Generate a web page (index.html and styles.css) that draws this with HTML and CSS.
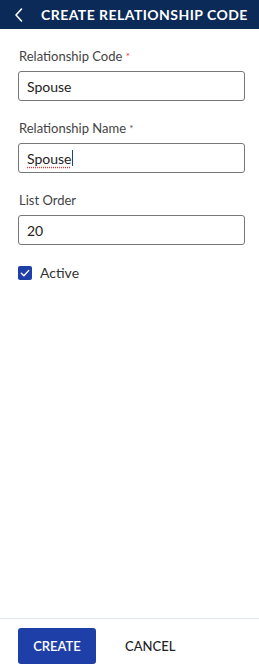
FILE: index.html
```html
<!DOCTYPE html>
<html lang="en">
<head>
  <meta charset="UTF-8" />
  <title>Create Relationship Code</title>
  <link rel="stylesheet" href="styles.css">
</head>
<body>
  <div class="panel">
    <header class="panel-header">
      <button class="back" aria-label="Back">
        <svg viewBox="0 0 10 16" width="10" height="16" aria-hidden="true">
          <path d="M7.5 2 L2 8 L7.5 14" fill="none" stroke="#fff" stroke-width="1.6" stroke-linecap="round" stroke-linejoin="round"/>
        </svg>
      </button>
      <h1 class="title">Create Relationship Code</h1>
    </header>

    <form class="form">
      <div class="field">
        <label class="label">Relationship Code <span class="req">*</span></label>
        <input class="input" type="text" value="Spouse">
      </div>
      <div class="field">
        <label class="label">Relationship Name <span class="req dim">*</span></label>
        <div class="input focused"><span class="typo">Spouse</span><span class="caret"></span></div>
      </div>
      <div class="field">
        <label class="label">List Order</label>
        <input class="input" type="text" value="20">
      </div>
      <label class="check">
        <span class="box">
          <svg viewBox="0 0 14 14" width="14" height="14" aria-hidden="true">
            <path d="M3.3 7.2 L5.9 9.8 L10.8 4.4" fill="none" stroke="#fff" stroke-width="1.4" stroke-linecap="round" stroke-linejoin="round"/>
          </svg>
        </span>
        Active
      </label>
    </form>

    <footer class="actions">
      <button class="btn primary">Create</button>
      <button class="btn plain">Cancel</button>
    </footer>
  </div>
</body>
</html>
```

FILE: styles.css
```css
* {
  box-sizing: border-box;
  margin: 0;
  padding: 0;
}

body {
  font-family: Lato, 'Open Sans', sans-serif;
  background: #fff;
  color: #222;
}

.panel {
  display: flex;
  flex-direction: column;
  height: 666px;
}

.panel-header {
  height: 29px;
  background: #0b2a57;
  display: flex;
  align-items: center;
  padding-left: 14px;
  gap: 17px;
}

.back {
  border: none;
  background: none;
  display: flex;
  align-items: center;
}

.title {
  color: #fff;
  font-size: 14px;
  font-weight: 700;
  text-transform: uppercase;
  letter-spacing: 0.45px;
  white-space: nowrap;
}

.form {
  flex: 1;
  padding: 19px 14px 0 18px;
  display: flex;
  flex-direction: column;
}

.field {
  display: flex;
  flex-direction: column;
  margin-bottom: 19px;
}

.label {
  font-size: 13px;
  color: #444;
  padding-left: 1px;
  margin-bottom: 7px;
  line-height: 16px;
}

.req {
  color: #e53935;
  font-size: 10px;
  vertical-align: top;
}
.req.dim {
  color: #555;
}

.input {
  height: 30px;
  border: 1px solid #777;
  border-radius: 3px;
  padding: 0 8px;
  font-family: inherit;
  font-size: 14px;
  color: #222;
  width: 227px;
  outline: none;
  display: flex;
  align-items: center;
}

.typo {
  text-decoration: underline dotted #e53935;
  text-underline-offset: 3px;
}

.caret {
  width: 1px;
  height: 16px;
  background: #1a3fa0;
}

.check {
  display: flex;
  align-items: center;
  gap: 8px;
  font-size: 14px;
  color: #333;
  margin-top: 0;
}

.box {
  width: 14px;
  height: 14px;
  border-radius: 2px;
  background: #1e3ea8;
  display: flex;
}

.actions {
  border-top: 1px solid #e0e6ed;
  padding: 9px 18px 2px;
  display: flex;
  align-items: center;
  gap: 29px;
}

.btn {
  font-family: inherit;
  font-size: 13px;
  font-weight: 600;
  text-transform: uppercase;
  border: none;
  background: none;
  cursor: pointer;
}

.btn.primary {
  width: 78px;
  height: 36px;
  background: #1e3ea8;
  color: #fff;
  border-radius: 3px;
}

.btn.plain {
  color: #222;
  font-weight: 500;
}
```
